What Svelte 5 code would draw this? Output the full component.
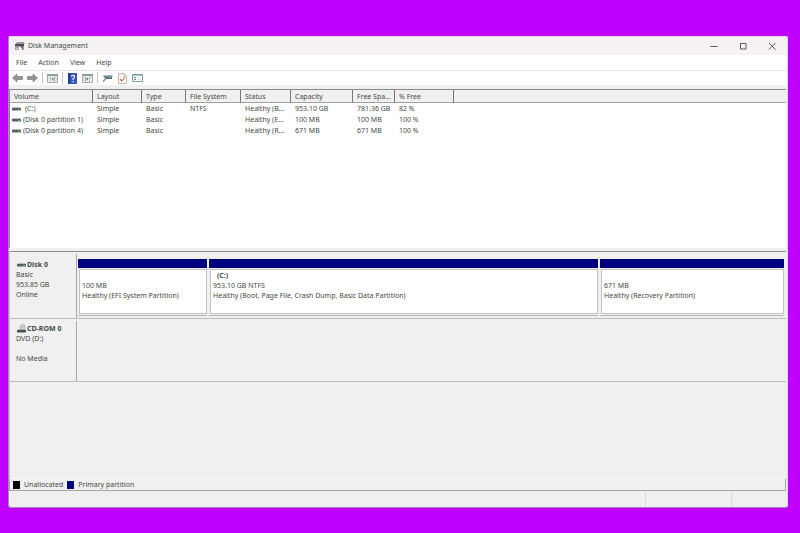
<script>
  const menus = ['File', 'Action', 'View', 'Help'];

  const columns = [
    { title: 'Volume', width: 83 },
    { title: 'Layout', width: 49 },
    { title: 'Type', width: 44 },
    { title: 'File System', width: 55 },
    { title: 'Status', width: 50 },
    { title: 'Capacity', width: 62 },
    { title: 'Free Spa...', width: 42 },
    { title: '% Free', width: 59 }
  ];

  const volumes = [
    [' (C:)', 'Simple', 'Basic', 'NTFS', 'Healthy (B...', '953.10 GB', '781.36 GB', '82 %'],
    ['(Disk 0 partition 1)', 'Simple', 'Basic', '', 'Healthy (E...', '100 MB', '100 MB', '100 %'],
    ['(Disk 0 partition 4)', 'Simple', 'Basic', '', 'Healthy (R...', '671 MB', '671 MB', '100 %']
  ];

  const partitions = [
    { name: '', size: '100 MB', status: 'Healthy (EFI System Partition)', share: 129 },
    { name: '(C:)', size: '953.10 GB NTFS', status: 'Healthy (Boot, Page File, Crash Dump, Basic Data Partition)', share: 389 },
    { name: '', size: '671 MB', status: 'Healthy (Recovery Partition)', share: 184 }
  ];

  const tracks = partitions.map((p) => `minmax(0, ${p.share}fr)`).join(' ');
</script>

{#snippet driveIcon()}
  <svg class="drive" width="9" height="8" viewBox="0 0 9 8" aria-hidden="true">
    <path d="M1 2h7l1 1.500H0z" fill="#b5bdb8" />
    <path d="M0 3h9v2.500H0z" fill="#56635c" />
    <path d="M6 4h2v1H6z" fill="#73b08a" />
  </svg>
{/snippet}

<main class="window">
  <header class="titlebar">
    <svg width="11" height="10" viewBox="0 0 11 10" aria-hidden="true">
      <path d="M3 1h7l1 2H1.500z" fill="#9a9a9e" />
      <path d="M1 3h9v2.500H1z" fill="#4d4d52" />
      <path d="M1 6h4l-.5 3H1z" fill="#9d9da2" />
      <path d="M7 5h2.500v4H8V7H7z" fill="#6a6a70" />
      <path d="M2 7h2v1H2z" fill="#dcdce0" />
    </svg>
    <h1>Disk Management</h1>
    <div class="controls">
      <button aria-label="Minimize">
        <svg width="8" height="8" viewBox="0 0 8 8"><path d="M.5 4.500h7" /></svg>
      </button>
      <button aria-label="Maximize">
        <svg width="8" height="8" viewBox="0 0 8 8"><path d="M1.500 1.500h5.500v5.500h-5.500z" /></svg>
      </button>
      <button aria-label="Close">
        <svg width="8" height="8" viewBox="0 0 8 8"><path d="M1 1l6.500 6.500M7.500 1L1 7.500" /></svg>
      </button>
    </div>
  </header>

  <nav class="menubar">
    {#each menus as menu}
      <button>{menu}</button>
    {/each}
  </nav>

  <div class="toolbar">
    <button aria-label="Back">
      <svg width="11" height="10" viewBox="0 0 11 10">
        <path d="M.5 5L5 1v2.500h5.500v3H5V9z" fill="#929292" stroke="#747474" stroke-width=".6" />
      </svg>
    </button>
    <button aria-label="Forward">
      <svg width="11" height="10" viewBox="0 0 11 10">
        <path d="M10.500 5L6 1v2.500H.5v3H6V9z" fill="#929292" stroke="#747474" stroke-width=".6" />
      </svg>
    </button>
    <span class="divider"></span>
    <button aria-label="Show or hide console tree">
      <svg width="11" height="10" viewBox="0 0 11 10">
        <path d="M.5 1.500h10v8H.5z" fill="#f4f6f6" stroke="#a3abab" />
        <path d="M0 1h11v2H0z" fill="#8ca0a4" />
        <path d="M3.500 3v6M7.500 3v6M1 5h2M8 5h2M8 7h2" stroke="#b9c4c0" />
        <path d="M6.500 4v4L4.500 6z" fill="#4b8a75" />
      </svg>
    </button>
    <span class="divider"></span>
    <button aria-label="Help">
      <svg width="9" height="11" viewBox="0 0 9 11">
        <path d="M0 0h9v11H0z" fill="#3558b8" />
        <path d="M0 0h2v11H0z" fill="#203b91" />
        <path d="M3.500 3.800Q3.700 2.200 5.100 2.200Q6.700 2.300 6.600 3.800Q6.500 4.700 5.100 5.500V7M5.100 8v1.200" fill="none" stroke="#fff" stroke-width="1.100" />
      </svg>
    </button>
    <button aria-label="Show or hide action pane">
      <svg width="11" height="10" viewBox="0 0 11 10">
        <path d="M.5 1.500h10v8H.5z" fill="#f4f6f6" stroke="#a3abab" />
        <path d="M0 1h11v2H0z" fill="#8c9ca4" />
        <path d="M3.500 3v6M7.500 3v6M1 5h2M1 7h2M8 5h2" stroke="#b9c4c0" />
        <path d="M4.500 4v4l2-2z" fill="#5a6f77" />
      </svg>
    </button>
    <span class="divider"></span>
    <button aria-label="Rescan disks">
      <svg width="11" height="10" viewBox="0 0 11 10">
        <path d="M2 2h8l1 2H1z" fill="#a7b9c2" />
        <path d="M1 3.500h9V6H4z" fill="#566f7c" />
        <path d="M1 8.500L4 5.500" stroke="#7b878d" stroke-width="1.300" />
        <path d="M7 4h2v1H7z" fill="#64a890" />
      </svg>
    </button>
    <button aria-label="Properties">
      <svg width="9" height="11" viewBox="0 0 9 11">
        <path d="M.5.5h5.500l2.500 2.500v7.500h-8z" fill="#fdf8f4" stroke="#c2b8b2" />
        <path d="M6 .5V3h2.500" fill="none" stroke="#c2b8b2" />
        <path d="M2 6l1.800 2L7 4" fill="none" stroke="#c87558" stroke-width="1.200" />
      </svg>
    </button>
    <button aria-label="Settings">
      <svg width="11" height="10" viewBox="0 0 11 10">
        <path d="M.5 1.500h10v7H.5z" fill="#fff" stroke="#8599a1" />
        <path d="M1 2h9v1H1z" fill="#a9c2d0" />
        <path d="M2 4.500h2M2 6.500h2" stroke="#4f8699" />
        <path d="M5 4.500h4M5 6.500h4" stroke="#dde3e4" />
      </svg>
    </button>
  </div>

  <section class="volumes">
    <table>
      <colgroup>
        {#each columns as column}
          <col style="width: {column.width}px" />
        {/each}
        <col />
      </colgroup>
      <thead>
        <tr>
          {#each columns as column}
            <th scope="col">{column.title}</th>
          {/each}
          <td></td>
        </tr>
      </thead>
      <tbody>
        {#each volumes as volume}
          <tr>
            {#each volume as cell, i}
              <td>
                {#if i === 0}
                  <span class="volume" class:lettered={cell.startsWith(' ')}>{@render driveIcon()}{cell.trim()}</span>
                {:else}
                  {cell}
                {/if}
              </td>
            {/each}
            <td></td>
          </tr>
        {/each}
      </tbody>
    </table>
  </section>

  <section class="disks">
    <article class="disk">
      <div class="info">
        <h2>{@render driveIcon()}Disk 0</h2>
        <p>Basic</p>
        <p>953.85 GB</p>
        <p>Online</p>
      </div>
      <div class="partitions" style="grid-template-columns: {tracks}">
        {#each partitions as partition}
          <div class="partition">
            <div class="stripe"></div>
            <div class="detail">
              <strong>{partition.name}</strong>
              <span>{partition.size}</span>
              <span>{partition.status}</span>
            </div>
          </div>
        {/each}
      </div>
    </article>

    <article class="disk">
      <div class="info">
        <h2>
          <svg class="drive" width="9" height="10" viewBox="0 0 9 10" aria-hidden="true">
            <circle cx="5.500" cy="3" r="2.500" fill="#d4dad5" stroke="#9aa39d" stroke-width=".7" />
            <circle cx="5.500" cy="3" r=".7" fill="#88908b" />
            <path d="M1.500 5h6.500l1 1.500H0z" fill="#a6afa9" />
            <path d="M0 6h9v2.500H0z" fill="#4a554f" />
          </svg>CD-ROM 0
        </h2>
        <p>DVD (D:)</p>
        <p></p>
        <p>No Media</p>
      </div>
    </article>
  </section>

  <div class="legend">
    <span class="swatch unallocated"></span>Unallocated
    <span class="swatch primary"></span>Primary partition
  </div>

  <footer class="statusbar">
    <span></span>
    <span></span>
    <span></span>
  </footer>
</main>

<style>
  :global(body) {
    background: #bf00ff;
  }

  .window {
    box-sizing: border-box;
    display: flex;
    flex-direction: column;
    min-height: calc(100vh - 61px);
    margin: 36px 12px 25px 8px;
    border: 1px solid #a88bb5;
    border-top-color: #e6d5ee;
    border-right-color: #e6d5ee;
    border-radius: 2px 2px 3px 3px;
    overflow: hidden;
    background: #f0f0f0;
    color: #3f4a44;
    font-family: 'Noto Sans', 'Open Sans', sans-serif;
    font-size: 7px;
    line-height: 10px;
  }

  button {
    display: flex;
    align-items: center;
    justify-content: center;
    padding: 0;
    border: 0;
    background: none;
    color: inherit;
    font: inherit;
  }

  svg {
    display: block;
    flex-shrink: 0;
  }

  .titlebar {
    display: flex;
    align-items: center;
    gap: 3px;
    height: 17px;
    padding: 0 1px 1px 5px;
    background: #f5f1f5;
  }

  h1 {
    flex: 1;
    margin: 0;
    font-size: 7px;
    font-weight: 400;
  }

  .controls {
    display: flex;
  }

  .controls button {
    width: 29px;
    height: 17px;
  }

  .controls path {
    fill: none;
    stroke: #5c565c;
  }

  .menubar {
    display: flex;
    gap: 11px;
    height: 15px;
    padding-left: 7px;
    border-bottom: 1px solid #e6e6e6;
    background: #fff;
  }

  .toolbar {
    display: flex;
    align-items: center;
    gap: 4px;
    height: 14px;
    padding-left: 3px;
    background: #fff;
  }

  .toolbar button {
    width: 11px;
  }

  .divider {
    width: 1px;
    height: 12px;
    background: #c4c4c4;
  }

  .volumes {
    height: 158px;
    margin: 4px 1px 0 0;
    border-top: 1px solid #8a8a8a;
    border-left: 1px solid #8a8a8a;
    background: #fff;
  }

  table {
    width: 100%;
    border-collapse: separate;
    border-spacing: 0;
    table-layout: fixed;
  }

  th,
  td {
    height: 11px;
    padding: 0 0 0 4px;
    font-weight: 400;
    line-height: 11px;
    text-align: left;
    white-space: nowrap;
  }

  thead th,
  thead td {
    border-bottom: 1px solid #a0a0a0;
    background: #f0f0f0;
  }

  thead th {
    height: 12px;
    border-right: 1px solid #777;
  }

  tbody td:first-child {
    padding-left: 2px;
  }

  .volume {
    display: flex;
    align-items: center;
    gap: 2px;
  }

  .lettered {
    gap: 4px;
  }

  .disks {
    flex: 1;
    margin: 3px 1px 0 0;
    border-top: 1px solid #8c8c8c;
    border-left: 1px solid #c9c9c9;
  }

  .disk {
    display: flex;
    height: 63px;
    padding-top: 2px;
    box-sizing: border-box;
    border-bottom: 1px solid #bcbcbc;
  }

  .disk:first-child {
    height: 67px;
  }

  .info {
    box-sizing: border-box;
    width: 67px;
    padding: 6px 0 0 6px;
    border-right: 1px solid #a8a8a8;
  }

  .disk + .disk .info {
    padding-top: 3px;
  }

  h2 {
    display: flex;
    align-items: center;
    height: 10px;
    gap: 1px;
    margin: 0;
    padding-left: 1px;
    font-size: 7px;
    font-weight: 700;
    white-space: nowrap;
  }

  p {
    height: 10px;
    margin: 0;
  }

  .partitions {
    flex: 1;
    display: grid;
    gap: 2px;
    margin: 5px 2px 2px 1px;
  }

  .partition {
    display: flex;
    flex-direction: column;
    gap: 1px;
    border-bottom: 1px solid #b5b5b5;
  }

  .stripe {
    height: 9px;
    background: #000080;
  }

  .detail {
    flex: 1;
    display: flex;
    flex-direction: column;
    margin: 0 0 1px 1px;
    padding: 1px 0 0 2px;
    border: 1px solid #c2c2c2;
    background: #fff;
    white-space: nowrap;
  }

  .detail strong {
    height: 10px;
    padding-left: 4px;
  }

  .legend {
    display: flex;
    align-items: center;
    gap: 4px;
    height: 11px;
    margin-right: 1px;
    padding-left: 3px;
    border: 1px solid #a6a6a6;
    border-top-color: #fafafa;
  }

  .swatch {
    width: 7px;
    height: 8px;
  }

  .unallocated {
    background: #000;
  }

  .primary {
    background: #000080;
  }

  .statusbar {
    box-sizing: border-box;
    display: grid;
    grid-template-columns: 1fr 86px 56px;
    height: 16px;
    padding-top: 1px;
  }

  .statusbar span + span {
    border-left: 1px solid #dadada;
  }
</style>
